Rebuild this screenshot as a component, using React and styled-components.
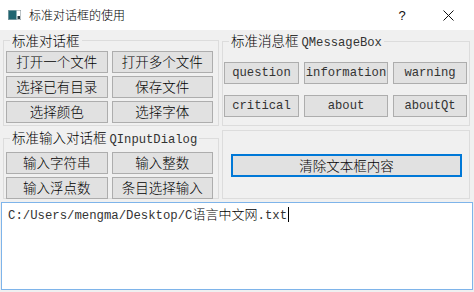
import React from "react";
import styled, { createGlobalStyle } from "styled-components";

const CJK = '"Noto Sans CJK SC", "Noto Sans", sans-serif';
const MONO = '"Liberation Mono", "Noto Sans CJK SC", monospace';

const GlobalStyle = createGlobalStyle`
  html, body { margin: 0; padding: 0; }
  body { background: #f0f0f0; font-family: ${CJK}; font-weight: 300; overflow: hidden; }
  * { box-sizing: border-box; }
`;

const Window = styled.div`
  width: 474px;
  height: 292px;
  background: #f0f0f0;
  display: flex;
  flex-direction: column;
`;

const TitleBar = styled.div`
  height: 30px;
  flex: none;
  background: #fff;
  display: flex;
  align-items: center;
  padding-left: 8px;
`;

const TitleText = styled.span`
  margin-left: 8px;
  font-size: 12px;
  line-height: 1;
  color: #000;
  font-family: ${CJK};
  font-weight: 300;
`;

const TitleControls = styled.div`
  margin-left: auto;
  margin-right: 3px;
  display: flex;
  height: 100%;
`;

const TitleButton = styled.div`
  width: 46px;
  height: 100%;
  display: flex;
  align-items: center;
  justify-content: center;
  color: #111;
  font-family: "Liberation Sans", sans-serif;
  font-size: 13px;
`;

const Panels = styled.div`
  display: grid;
  grid-template-columns: 216px 248px;
  grid-template-rows: 93px 69px;
  column-gap: 3px;
  row-gap: 4px;
  padding: 3px 0 0 3px;
`;

const Group = styled.fieldset`
  margin: 0;
  min-width: 0;
  padding: 0;
  border: 1px solid #dcdcdc;
`;

const Legend = styled.legend`
  margin-left: 6px;
  padding: 0 2px;
  font-family: ${CJK};
  font-weight: 300;
  font-size: 13.5px;
  line-height: 14px;
  color: #000;
`;

const Latin = styled.span`
  font-family: ${MONO};
  font-weight: 400;
  font-size: 12.2px;
  color: #333;
`;

const ButtonGrid = styled.div`
  display: grid;
  grid-template-columns: ${(p) => p.$cols};
  grid-auto-rows: 22px;
  column-gap: ${(p) => p.$colGap || "4px"};
  row-gap: ${(p) => p.$rowGap || "3px"};
  padding: ${(p) => p.$pad};
`;

const Button = styled.button`
  margin: 0;
  padding: 0;
  height: 100%;
  background: #e1e1e1;
  border: 1px solid #adadad;
  border-radius: 0;
  color: ${(p) => (p.$mono ? "#333" : "#000")};
  font-family: ${(p) => (p.$mono ? MONO : CJK)};
  font-weight: ${(p) => (p.$mono ? 400 : 300)};
  font-size: ${(p) => (p.$mono ? "12.2px" : "13.5px")};
  line-height: 1;
  display: flex;
  align-items: center;
  justify-content: center;
  white-space: nowrap;
`;

const ClearArea = styled.div`
  padding: 23px 7px 0 8px;
`;

const DefaultButton = styled(Button)`
  width: 100%;
  height: 23px;
  border: 1px solid #0078d7;
  box-shadow: inset 0 0 0 1px #0078d7;
`;

const TextEdit = styled.div`
  margin: 3px 0 0 1px;
  width: 472px;
  height: 88px;
  background: #fff;
  border: 1px solid #7eb4ea;
  padding: 2px 6px;
  font-family: ${MONO};
  font-weight: 400;
  font-size: 12.3px;
  line-height: 18px;
  color: #333;
  white-space: nowrap;
`;

const CjkRun = styled.span`
  font-family: ${CJK};
  font-weight: 300;
  font-size: 13px;
  color: #000;
`;

const Caret = styled.span`
  display: inline-block;
  width: 1px;
  height: 15px;
  background: #000;
  vertical-align: -3px;
  margin-left: 1px;
`;

const AppIcon = () => (
  <svg width="13" height="10" viewBox="0 0 13 10">
    <rect x="0" y="0" width="13" height="10" fill="#fff" stroke="#7a8a90" strokeWidth="1" />
    <rect x="0.5" y="0.5" width="8" height="9" fill="#1f6470" />
    <rect x="9.5" y="6" width="2.5" height="3" fill="#2a3c44" />
  </svg>
);

const CloseIcon = () => (
  <svg width="11" height="11" viewBox="0 0 11 11">
    <path d="M0.5 0.5 L10.5 10.5 M10.5 0.5 L0.5 10.5" stroke="#111" strokeWidth="1" fill="none" />
  </svg>
);

export default function App() {
  return (
    <>
      <GlobalStyle />
      <Window>
        <TitleBar>
          <AppIcon />
          <TitleText>标准对话框的使用</TitleText>
          <TitleControls>
            <TitleButton>?</TitleButton>
            <TitleButton>
              <CloseIcon />
            </TitleButton>
          </TitleControls>
        </TitleBar>
        <Panels>
          <Group>
            <Legend>标准对话框</Legend>
            <ButtonGrid $cols="1fr 1fr" $pad="4px 5px 0 2px">
              <Button>打开一个文件</Button>
              <Button>打开多个文件</Button>
              <Button>选择已有目录</Button>
              <Button>保存文件</Button>
              <Button>选择颜色</Button>
              <Button>选择字体</Button>
            </ButtonGrid>
          </Group>
          <Group>
            <Legend>
              标准消息框 <Latin>QMessageBox</Latin>
            </Legend>
            <ButtonGrid $cols="75px 84px 74px" $colGap="5px" $rowGap="11px" $pad="12px 1px 0 1px">
              <Button $mono>question</Button>
              <Button $mono>information</Button>
              <Button $mono>warning</Button>
              <Button $mono>critical</Button>
              <Button $mono>about</Button>
              <Button $mono>aboutQt</Button>
            </ButtonGrid>
          </Group>
          <Group>
            <Legend>
              标准输入对话框 <Latin>QInputDialog</Latin>
            </Legend>
            <ButtonGrid $cols="1fr 1fr" $pad="5px 5px 0 2px">
              <Button>输入字符串</Button>
              <Button>输入整数</Button>
              <Button>输入浮点数</Button>
              <Button>条目选择输入</Button>
            </ButtonGrid>
          </Group>
          <Group>
            <ClearArea>
              <DefaultButton>清除文本框内容</DefaultButton>
            </ClearArea>
          </Group>
        </Panels>
        <TextEdit>
          C:/Users/mengma/Desktop/C<CjkRun>语言中文网</CjkRun>.txt
          <Caret />
        </TextEdit>
      </Window>
    </>
  );
}
